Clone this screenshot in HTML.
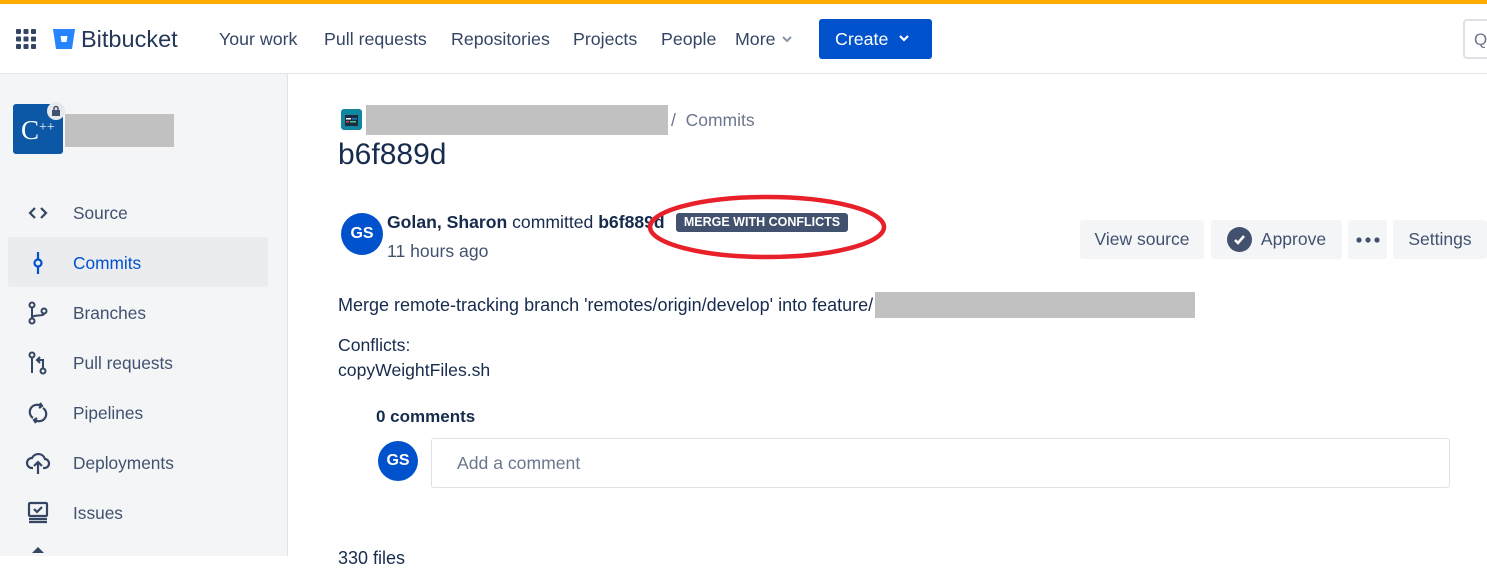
<!DOCTYPE html>
<html><head><meta charset="utf-8"><style>
*{margin:0;padding:0;box-sizing:border-box}
body{width:1487px;height:556px;overflow:hidden;background:#fff;font-family:"Liberation Sans",sans-serif;color:#172b4d;position:relative}
.a{position:absolute;white-space:nowrap}
.nav{font-size:17.8px;color:#344563;top:29px}
.side{font-size:17.3px;color:#42526e;left:73px}
.btn{position:absolute;top:220px;height:39px;background:#f4f5f7;border-radius:3px;font-size:17.5px;color:#42526e;display:flex;align-items:center;justify-content:center}
</style></head><body>
<div class="a" style="left:0;top:0;width:1487px;height:4px;background:#ffab00"></div>
<div class="a" style="left:0;top:73px;width:1487px;height:1px;background:#e4e6ea"></div>
<svg class="a" style="left:16px;top:29px" width="20" height="20" viewBox="0 0 20 20" fill="#344563">
<rect x="0" y="0" width="5" height="5" rx="1"/><rect x="7.5" y="0" width="5" height="5" rx="1"/><rect x="15" y="0" width="5" height="5" rx="1"/>
<rect x="0" y="7.5" width="5" height="5" rx="1"/><rect x="7.5" y="7.5" width="5" height="5" rx="1"/><rect x="15" y="7.5" width="5" height="5" rx="1"/>
<rect x="0" y="15" width="5" height="5" rx="1"/><rect x="7.5" y="15" width="5" height="5" rx="1"/><rect x="15" y="15" width="5" height="5" rx="1"/></svg>
<svg class="a" style="left:53px;top:29px" width="22" height="20" viewBox="0 0 22 20"><path d="M0 0H22L19 20H3Z" fill="#2684ff"/><path d="M7.5 7H14.5L13.5 13H8.5Z" fill="#fff"/></svg>
<div class="a" style="left:81px;top:26px;font-size:23.5px;color:#253858">Bitbucket</div>
<div class="a nav" style="left:219px">Your work</div>
<div class="a nav" style="left:324px">Pull requests</div>
<div class="a nav" style="left:451px">Repositories</div>
<div class="a nav" style="left:573px">Projects</div>
<div class="a nav" style="left:661px">People</div>
<div class="a nav" style="left:735px">More</div>
<svg class="a" style="left:781px;top:35px" width="12" height="8" viewBox="0 0 12 8"><path d="M2 2L6 6L10 2" stroke="#8993a4" stroke-width="2" fill="none"/></svg>
<div class="a" style="left:819px;top:19px;width:113px;height:40px;background:#0052cc;border-radius:3px;color:#fff;font-size:17.8px;padding:10px 0 0 16px">Create</div>
<svg class="a" style="left:898px;top:34px" width="12" height="9" viewBox="0 0 12 9"><path d="M2 2L6 6L10 2" stroke="#fff" stroke-width="2.2" fill="none"/></svg>
<div class="a" style="left:1463px;top:19px;width:40px;height:40px;border:2px solid #dfe1e6;border-radius:4px;font-size:17px;color:#6b778c;padding:9px 0 0 9px">Q</div>
<div class="a" style="left:0;top:74px;width:288px;height:482px;background:#f4f5f7;border-right:1px solid #e1e3e8"></div>
<div class="a" style="left:13px;top:104px;width:50px;height:50px;background:#0d58a6;border-radius:3px;color:#fff;font-family:'Liberation Serif',serif;font-size:27px;padding:11px 0 0 8px">C<span style="font-size:14px;vertical-align:8px">++</span></div>
<div class="a" style="left:47px;top:102px;width:18px;height:18px;border-radius:50%;background:#e6e8ec"></div>
<svg class="a" style="left:51px;top:105px" width="10" height="12" viewBox="0 0 10 12"><rect x="1" y="5" width="8" height="6" fill="#42526e"/><path d="M3 5V3.5a2 2 0 014 0V5" stroke="#42526e" stroke-width="1.5" fill="none"/></svg>
<div class="a" style="left:65px;top:114px;width:109px;height:33px;background:#c1c1c1"></div>
<div class="a" style="left:8px;top:237px;width:260px;height:50px;background:#ebecf0;border-radius:3px"></div>
<svg class="a" style="left:27px;top:203px" width="22" height="20" viewBox="0 0 22 20" fill="none" stroke="#344563" stroke-width="2.2"><path d="M8 5L3 10L8 15M14 5L19 10L14 15"/></svg>
<svg class="a" style="left:27px;top:251px" width="22" height="24" viewBox="0 0 22 24" fill="none" stroke="#0052cc" stroke-width="2.2"><path d="M11 1V8M11 16V23"/><circle cx="11" cy="12" r="3.5"/></svg>
<svg class="a" style="left:27px;top:301px" width="22" height="24" viewBox="0 0 22 24" fill="none" stroke="#344563" stroke-width="2"><circle cx="5" cy="4" r="2.5"/><circle cx="5" cy="20" r="2.5"/><circle cx="17" cy="10" r="2.5"/><path d="M5 6.5V17.5M5 17C5 13 17 16 17 12.5"/></svg>
<svg class="a" style="left:27px;top:351px" width="22" height="24" viewBox="0 0 22 24" fill="none" stroke="#344563" stroke-width="2"><circle cx="5" cy="4" r="2.5"/><path d="M5 6.5V22"/><circle cx="16" cy="20" r="2.5"/><path d="M16 17.5V9H11M13 6L10 9L13 12"/></svg>
<svg class="a" style="left:27px;top:401px" width="22" height="24" viewBox="0 0 22 24" fill="none" stroke="#344563" stroke-width="2.2"><path d="M6 17A7 7 0 0 1 14 5M16 7A7 7 0 0 1 8 19"/><path d="M13 2L15 5L12 7M9 22L7 19L10 17"/></svg>
<svg class="a" style="left:25px;top:451px" width="26" height="24" viewBox="0 0 26 24" fill="none" stroke="#344563" stroke-width="2.2"><path d="M8 17H7A5 5 0 0 1 7 7A7 7 0 0 1 20 8A4.5 4.5 0 0 1 19 17H18"/><path d="M13 23V11M9 15L13 11L17 15"/></svg>
<svg class="a" style="left:27px;top:501px" width="22" height="24" viewBox="0 0 22 24" fill="none" stroke="#344563" stroke-width="2.2"><rect x="2" y="2" width="18" height="13" rx="1"/><path d="M7 8L10 11L15 6M2 18H20M2 21H20"/></svg>
<svg class="a" style="left:29px;top:547px" width="18" height="10" viewBox="0 0 18 10"><path d="M9 0L15 6H3Z" fill="#344563"/></svg>
<div class="a side" style="top:203px">Source</div>
<div class="a side" style="top:253px;color:#0052cc">Commits</div>
<div class="a side" style="top:303px">Branches</div>
<div class="a side" style="top:353px">Pull requests</div>
<div class="a side" style="top:403px">Pipelines</div>
<div class="a side" style="top:453px">Deployments</div>
<div class="a side" style="top:503px">Issues</div>
<svg class="a" style="left:341px;top:109px" width="21" height="21" viewBox="0 0 21 21"><rect width="21" height="21" rx="3" fill="#10879e"/><rect x="4" y="6" width="13" height="11" fill="#1c2b41"/><rect x="5" y="9" width="5" height="1.5" fill="#fff"/><rect x="11" y="9" width="5" height="1.5" fill="#27c"/><rect x="5" y="12" width="3" height="1.5" fill="#e44"/><rect x="9" y="12" width="6" height="1.5" fill="#4c9"/></svg>
<div class="a" style="left:366px;top:105px;width:302px;height:30px;background:#c1c1c1"></div>
<div class="a" style="left:671px;top:110px;font-size:17.5px;color:#6b778c">/&nbsp;&nbsp;Commits</div>
<div class="a" style="left:338px;top:138px;font-size:30px;font-weight:500;color:#172b4d">b6f889d</div>
<div class="a" style="left:341px;top:213px;width:42px;height:42px;border-radius:50%;background:#0052cc;color:#fff;font-weight:bold;font-size:16px;text-align:center;line-height:42px">GS</div>
<div class="a" style="left:387px;top:212px;font-size:17.6px"><b>Golan, Sharon</b> committed <b>b6f889d</b></div>
<div class="a" style="left:387px;top:241px;font-size:17.6px;color:#42526e">11 hours ago</div>
<div class="a" style="left:676px;top:213px;width:172px;height:19px;background:#42526e;border-radius:3px;color:#fff;font-weight:bold;font-size:12.5px;text-align:center;line-height:19px">MERGE WITH CONFLICTS</div>
<svg class="a" style="left:645px;top:192px" width="245" height="72" viewBox="0 0 245 72"><ellipse cx="122" cy="35" rx="117" ry="30" fill="none" stroke="#e8202a" stroke-width="4.5"/></svg>
<div class="btn" style="left:1080px;width:124px">View source</div>
<div class="btn" style="left:1211px;width:131px"><svg width="25" height="25" viewBox="0 0 25 25" style="margin-right:9px"><circle cx="12.5" cy="12.5" r="12.5" fill="#42526e"/><path d="M8 13L11 16L17 9" stroke="#fff" stroke-width="2.5" fill="none"/></svg>Approve</div>
<div class="btn" style="left:1348px;width:39px"><svg width="24" height="6"><circle cx="3" cy="3" r="2.6" fill="#42526e"/><circle cx="12" cy="3" r="2.6" fill="#42526e"/><circle cx="21" cy="3" r="2.6" fill="#42526e"/></svg></div>
<div class="btn" style="left:1393px;width:94px">Settings</div>
<div class="a" style="left:338px;top:295px;font-size:18px">Merge remote-tracking branch 'remotes/origin/develop' into feature/</div>
<div class="a" style="left:875px;top:292px;width:320px;height:26px;background:#c1c1c1"></div>
<div class="a" style="left:338px;top:335px;font-size:17.6px">Conflicts:</div>
<div class="a" style="left:338px;top:360px;font-size:17.6px">copyWeightFiles.sh</div>
<div class="a" style="left:376px;top:407px;font-size:17px;font-weight:bold">0 comments</div>
<div class="a" style="left:378px;top:441px;width:40px;height:40px;border-radius:50%;background:#0052cc;color:#fff;font-weight:bold;font-size:16px;text-align:center;line-height:40px">GS</div>
<div class="a" style="left:431px;top:438px;width:1019px;height:50px;border:1px solid #dfe1e6;border-radius:3px;font-size:17.6px;color:#6b778c;padding:14px 0 0 25px">Add a comment</div>
<div class="a" style="left:338px;top:548px;font-size:18px">330 files</div>
</body></html>
